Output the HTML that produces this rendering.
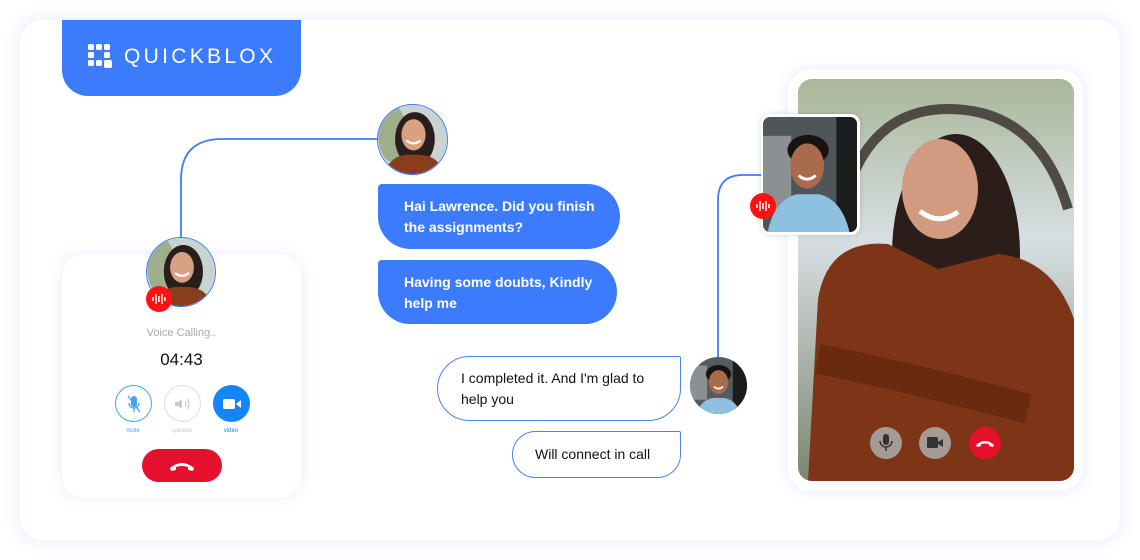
<!DOCTYPE html>
<html><head><meta charset="utf-8"><style>
*{margin:0;padding:0;box-sizing:border-box}
body{width:1140px;height:560px;background:#fff;position:relative;overflow:hidden;font-family:"Liberation Sans",sans-serif}
.abs{position:absolute}
.card{left:20px;top:20px;width:1100px;height:520px;border-radius:22px;background:#fff;box-shadow:0 0 14px 4px rgba(120,150,255,0.13)}
.tab{left:62px;top:20px;width:239px;height:76px;background:#3d7bfd;border-radius:0 0 26px 26px}
.sq{position:absolute;width:6px;height:6px;background:#fff;border-radius:1.5px}
.logo{left:124px;top:45px;color:#fff;font-size:21px;letter-spacing:3.3px;font-weight:400}
.bub{position:absolute;font-size:14px;line-height:21px;font-weight:bold;color:#fff;background:#3d7bfd;padding:12px 0 0 26px}
.wb{position:absolute;font-size:14px;line-height:21px;color:#111;background:#fff;border:1.3px solid #4a82f5}
.av{position:absolute;border-radius:50%;overflow:hidden;border:1.5px solid #3d7bfd;background:#fff}
.rec{position:absolute;width:26px;height:26px;border-radius:50%;background:#f11;display:flex;align-items:center;justify-content:center}
.call{left:62px;top:255px;width:239px;height:242px;border-radius:20px;background:#fff;box-shadow:0 0 12px 3px rgba(120,150,255,0.12)}
.cb{position:absolute;width:37px;height:37px;border-radius:50%;display:flex;align-items:center;justify-content:center}
.lb{position:absolute;font-size:6px;width:50px;text-align:center;top:428px}
</style></head><body>
<svg width="0" height="0" style="position:absolute">
<defs>
<symbol id="woman" viewBox="0 0 100 100">
<rect width="100" height="100" fill="#c9d3cf"/>
<ellipse cx="20" cy="40" rx="20" ry="40" fill="#9fae8c"/>
<ellipse cx="52" cy="48" rx="28" ry="38" fill="#2a1e1c"/>
<ellipse cx="50" cy="42" rx="17" ry="22" fill="#d7a184"/>
<path d="M40 50 Q50 58 60 50" stroke="#fff" stroke-width="3" fill="none"/>
<path d="M8 100 Q15 72 40 70 L60 70 Q88 72 94 100Z" fill="#8a3d1c"/>
</symbol>
<symbol id="man" viewBox="0 0 100 100">
<rect width="100" height="100" fill="#555b5f"/>
<rect x="0" y="15" width="30" height="60" fill="#8a9094"/>
<rect x="75" y="0" width="25" height="100" fill="#1c1c1c"/>
<ellipse cx="50" cy="30" rx="22" ry="16" fill="#1a1210"/>
<ellipse cx="50" cy="44" rx="17" ry="21" fill="#a86c4c"/>
<path d="M42 52 Q50 59 58 52" stroke="#fff" stroke-width="3" fill="none"/>
<path d="M12 100 Q18 76 40 72 L60 72 Q82 76 88 100Z" fill="#8ec0df"/>
</symbol>
</defs>
</svg>

<div class="abs card"></div>
<div class="abs tab"></div>
<div class="abs" style="left:88px;top:44px;width:32px;height:32px">
<div class="sq" style="left:0;top:0"></div><div class="sq" style="left:8px;top:0"></div><div class="sq" style="left:16px;top:0"></div>
<div class="sq" style="left:0;top:8px"></div><div class="sq" style="left:16px;top:8px"></div>
<div class="sq" style="left:0;top:16px"></div><div class="sq" style="left:8px;top:16px"></div><div class="sq" style="left:16px;top:16px;width:8px;height:8px"></div>
</div>
<div class="abs logo">QUICKBLOX</div>

<svg class="abs" style="left:0;top:0" width="1140" height="560">
<path d="M181 238 L181 180 Q181 139 222 139 L378 139" stroke="#3d7bfd" stroke-width="1.8" fill="none"/>
<path d="M718 357 L718 200 Q718 175 743 175 L762 175" stroke="#3d7bfd" stroke-width="1.8" fill="none"/>
</svg>

<div class="abs call"></div>
<div class="av" style="left:146px;top:237px;width:70px;height:70px"><svg width="70" height="70"><use href="#woman"/></svg></div>
<div class="rec" style="left:146px;top:286px"><svg width="14" height="12"><path d="M1 4v4M4 1v10M7 3v6M10 1v10M13 4v4" stroke="#fff" stroke-width="1.5"/></svg></div>
<div class="abs" style="left:62px;width:239px;top:327px;text-align:center;font-size:11px;color:#aaa">Voice Calling..</div>
<div class="abs" style="left:62px;width:239px;top:350px;text-align:center;font-size:17px;color:#111">04:43</div>
<div class="cb" style="left:115px;top:385px;border:1.5px solid #4aa0f0"><svg width="14" height="18"><rect x="4" y="1" width="6" height="11" rx="3" fill="#4aa0f0"/><path d="M2 8a5 5 0 0 0 10 0M7 13v4M1 1l12 16" stroke="#4aa0f0" stroke-width="1.3" fill="none"/></svg></div>
<div class="cb" style="left:164px;top:385px;border:1.5px solid #ddd"><svg width="18" height="14"><path d="M1 5h3l4-3v10l-4-3H1z" fill="#ccc"/><path d="M11 4q2 3 0 6M13 2q4 5 0 10" stroke="#ccc" stroke-width="1.2" fill="none"/></svg></div>
<div class="cb" style="left:213px;top:385px;background:#1585f5"><svg width="18" height="12"><rect x="0" y="1" width="12" height="10" rx="2" fill="#fff"/><path d="M13 6l5-4v8z" fill="#fff"/></svg></div>
<div class="lb" style="left:108px;color:#4aa0f0">mute</div>
<div class="lb" style="left:157px;color:#ccc">speaker</div>
<div class="lb" style="left:206px;color:#1585f5">video</div>
<div class="abs" style="left:142px;top:449px;width:80px;height:33px;border-radius:17px;background:#e5102b;display:flex;align-items:center;justify-content:center"><svg width="26" height="10"><path d="M1 7q12-10 24 0l-1 3-5-1v-3q-6-2-12 0v3l-5 1z" fill="#fff"/></svg></div>

<div class="av" style="left:377px;top:104px;width:71px;height:71px"><svg width="71" height="71"><use href="#woman"/></svg></div>
<div class="bub" style="left:378px;top:184px;width:242px;height:65px;border-radius:4px 33px 33px 33px;padding-top:12px">Hai Lawrence. Did you finish<br>the assignments?</div>
<div class="bub" style="left:378px;top:260px;width:239px;height:64px;border-radius:4px 33px 33px 33px;padding-top:12px">Having some doubts, Kindly<br>help me</div>
<div class="wb" style="left:437px;top:356px;width:244px;height:65px;border-radius:33px 2px 33px 33px;padding:11px 0 0 23px">I completed it. And I'm glad to<br>help you</div>
<div class="wb" style="left:512px;top:431px;width:169px;height:47px;border-radius:24px 2px 24px 24px;padding:12px 0 0 22px">Will connect in call</div>
<div class="av" style="left:690px;top:357px;width:57px;height:57px;border:none"><svg width="57" height="57"><use href="#man"/></svg></div>

<div class="abs" style="left:788px;top:70px;width:295px;height:421px;border-radius:22px;background:#fff;box-shadow:0 0 12px 3px rgba(120,150,255,0.14)"></div>
<div class="abs" style="left:798px;top:79px;width:276px;height:402px;border-radius:14px;overflow:hidden;background:#b9c4c4">
<svg width="276" height="402">
<defs><linearGradient id="bg" x1="0" y1="0" x2="0" y2="1"><stop offset="0" stop-color="#a9b79a"/><stop offset="0.4" stop-color="#d7dfe3"/><stop offset="1" stop-color="#7b8670"/></linearGradient></defs>
<rect width="276" height="402" fill="url(#bg)"/>
<path d="M40 150 Q60 30 150 30 Q240 30 270 130" stroke="#4d4b44" stroke-width="10" fill="none"/>
<ellipse cx="158" cy="175" rx="64" ry="120" fill="#2a1d1a"/>
<ellipse cx="142" cy="110" rx="38" ry="50" fill="#d29a7e"/>
<path d="M122 132 Q140 147 160 133" stroke="#fff" stroke-width="5" fill="none"/>
<path d="M10 402 L20 220 Q30 160 90 165 L140 190 L200 175 Q255 180 276 240 L276 402Z" fill="#7e3517"/>
<path d="M20 280 Q120 300 230 330" stroke="#6a2a10" stroke-width="30" fill="none"/>
<circle cx="88" cy="364" r="16" fill="#a69a96"/>
<rect x="85" y="355" width="6" height="11" rx="3" fill="#333"/><path d="M82 362a6 6 0 0 0 12 0M88 368v4" stroke="#333" stroke-width="1.5" fill="none"/>
<circle cx="137" cy="364" r="16" fill="#a69a96"/>
<rect x="129" y="358" width="11" height="11" rx="1" fill="#333"/><path d="M140 363l5-3v8l-5-3z" fill="#333"/>
<circle cx="187" cy="364" r="16" fill="#e5102b"/>
<path d="M178 366q9-8 18 0l-1 2-4-1v-2q-4-1-8 0v2l-4 1z" fill="#fff"/>
</svg>
</div>
<div class="abs" style="left:761px;top:114px;width:99px;height:121px;border-radius:9px;background:#fff;box-shadow:0 0 6px rgba(0,0,0,0.15)"></div>
<div class="abs" style="left:763px;top:117px;width:94px;height:115px;border-radius:7px;overflow:hidden"><svg width="94" height="115" viewBox="0 0 100 122" preserveAspectRatio="none"><rect width="100" height="122" fill="#4f5559"/><rect x="0" y="20" width="30" height="80" fill="#8a9094"/><rect x="78" y="0" width="22" height="122" fill="#1c1c1c"/><ellipse cx="48" cy="35" rx="22" ry="16" fill="#1a1210"/><ellipse cx="47" cy="52" rx="18" ry="24" fill="#a86c4c"/><path d="M38 62 Q47 70 56 62" stroke="#fff" stroke-width="3" fill="none"/><path d="M5 122 Q12 88 36 82 L60 82 Q84 88 92 122Z" fill="#8ec0df"/></svg></div>
<div class="rec" style="left:750px;top:193px"><svg width="14" height="12"><path d="M1 4v4M4 1v10M7 3v6M10 1v10M13 4v4" stroke="#fff" stroke-width="1.5"/></svg></div>
</body></html>
